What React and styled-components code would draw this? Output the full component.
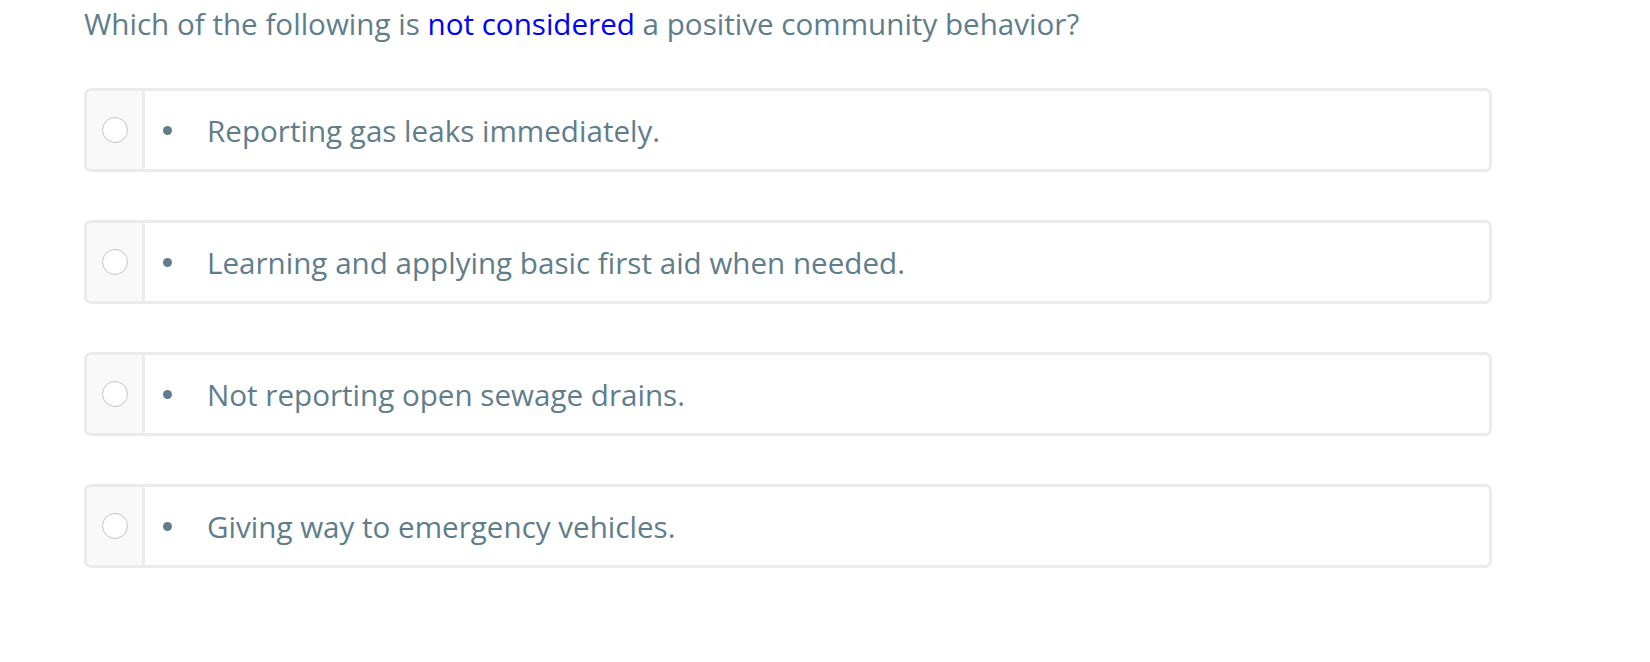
import styled, { createGlobalStyle } from "styled-components";

const Global = createGlobalStyle`
  body {
    margin: 0;
    background: #ffffff;
    font-family: "Open Sans", "Noto Sans", sans-serif;
  }
`;

const Wrap = styled.div`
  padding: 2px 0 0 84px;
  width: 1408px;
`;

const Question = styled.div`
  font-size: 29.6px;
  line-height: 44px;
  color: #607d8b;
  span {
    color: #0000ff;
  }
`;

const List = styled.div`
  margin-top: 42px;
  display: flex;
  flex-direction: column;
  gap: 48px;
`;

const Option = styled.label`
  display: flex;
  height: 84px;
  box-sizing: border-box;
  border: 3px solid #ebebeb;
  border-radius: 7px;
  overflow: hidden;
  cursor: pointer;
`;

const RadioCell = styled.div`
  width: 55px;
  flex: none;
  background: #f9f9f9;
  border-right: 3px solid #ebebeb;
  display: flex;
  align-items: center;
  justify-content: center;
`;

const Radio = styled.span`
  width: 26px;
  height: 26px;
  box-sizing: border-box;
  border: 1px solid #c4c4c4;
  border-radius: 50%;
  background: #ffffff;
`;

const Body = styled.div`
  display: flex;
  align-items: center;
  padding-left: 18px;
  font-size: 29.6px;
  color: #607d8b;
`;

const Dot = styled.span`
  width: 9px;
  height: 9px;
  border-radius: 50%;
  background: #607d8b;
  margin-right: 35px;
  flex: none;
`;

const options = [
  "Reporting gas leaks immediately.",
  "Learning and applying basic first aid when needed.",
  "Not reporting open sewage drains.",
  "Giving way to emergency vehicles.",
];

export default function App() {
  return (
    <Wrap>
      <Global />
      <Question>
        Which of the following is <span>not considered</span> a positive
        community behavior?
      </Question>
      <List>
        {options.map((o) => (
          <Option key={o}>
            <RadioCell>
              <Radio />
            </RadioCell>
            <Body>
              <Dot />
              {o}
            </Body>
          </Option>
        ))}
      </List>
    </Wrap>
  );
}
